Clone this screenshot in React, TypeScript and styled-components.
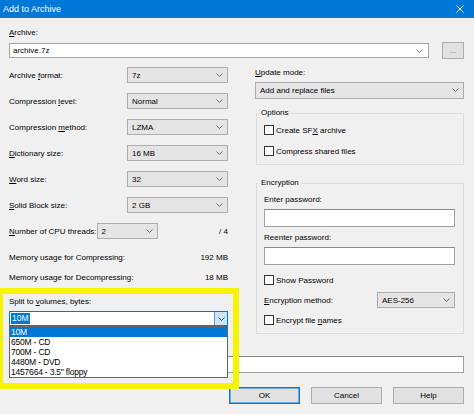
import React from "react";
import styled, { createGlobalStyle } from "styled-components";

const Global = createGlobalStyle`
  html, body { margin: 0; padding: 0; background: #f0f0f0; }
  body { font-family: "Liberation Sans", Arial, sans-serif; font-size: 8px; color: #000; }
  * { box-sizing: border-box; }
  u { text-decoration-thickness: 1px; text-underline-offset: 1px; }
`;

const Window = styled.div`
  position: relative;
  width: 474px;
  height: 414px;
  overflow: hidden;
  background: #f0f0f0;
  display: flex;
  flex-direction: column;
`;

const TitleBar = styled.div`
  flex: none;
  height: 18px;
  background: #0078d7;
  color: #fff;
  display: flex;
  align-items: center;
  justify-content: space-between;
  padding: 0 10px 0 3px;
  font-size: 9px;
`;

const Body = styled.div`
  display: flex;
  flex-direction: column;
  padding: 0 10px 0 9px;
`;

const Label = styled.div<{ $mt?: number }>`
  height: 12px;
  line-height: 12px;
  margin-top: ${(p) => p.$mt ?? 0}px;
  white-space: nowrap;
`;

const ArchiveRow = styled.div`
  display: flex;
  align-items: flex-start;
  height: 17px;
  margin-top: 3px;
`;

const EditCombo = styled.div`
  width: 420px;
  height: 15px;
  margin-top: 1px;
  background: #fff;
  border: 1px solid #a6a6a6;
  display: flex;
  align-items: center;
  justify-content: space-between;
  padding: 0 5px 0 3px;
`;

const SmallButton = styled.div`
  margin-left: auto;
  width: 22px;
  height: 17px;
  background: #e1e1e1;
  border: 1px solid #adadad;
  color: #777;
  display: flex;
  align-items: center;
  justify-content: center;
  line-height: 1;
`;

const Columns = styled.div`
  display: grid;
  grid-template-columns: 219px 209px;
  column-gap: 27px;
  margin-top: 8px;
  align-items: start;
`;

const Column = styled.div`
  display: flex;
  flex-direction: column;
`;

const FieldRow = styled.div<{ $mt?: number }>`
  display: flex;
  align-items: center;
  height: 16px;
  margin-top: ${(p) => p.$mt ?? 0}px;
`;

const RowLabel = styled.div`
  flex: 1;
  white-space: nowrap;
`;

const Select = styled.div<{ $w?: number; $h?: number }>`
  flex: none;
  width: ${(p) => (p.$w ? `${p.$w}px` : "100%")};
  height: ${(p) => p.$h ?? 16}px;
  background: #e5e5e5;
  border: 1px solid #adadad;
  display: flex;
  align-items: center;
  justify-content: space-between;
  padding: 0 4px 0 4px;
  white-space: nowrap;
`;

const Suffix = styled.div`
  flex: 1;
  text-align: right;
`;

const InfoRow = styled.div<{ $mt: number }>`
  display: flex;
  justify-content: space-between;
  height: 12px;
  line-height: 12px;
  margin-top: ${(p) => p.$mt}px;
`;

const ComboField = styled.div`
  position: relative;
  margin-top: 3px;
  height: 15px;
`;

const FocusCombo = styled.div`
  height: 15px;
  background: #fff;
  border: 1px solid #0078d7;
  display: flex;
  align-items: stretch;
  padding-left: 1px;
`;

const SelectedText = styled.span`
  align-self: center;
  background: #0078d7;
  color: #fff;
  height: 11px;
  line-height: 11px;
  padding: 0 1px;
  font-size: 8.5px;
`;

const ComboArrow = styled.div`
  margin-left: auto;
  width: 13px;
  background: #cce4f7;
  border-left: 1px solid #569de5;
  display: flex;
  align-items: center;
  justify-content: center;
`;

const DropList = styled.div`
  position: absolute;
  top: 100%;
  left: 0;
  right: 0;
  background: #fff;
  border: 1px solid #646464;
  z-index: 5;
`;

const DropItem = styled.div<{ $active?: boolean }>`
  height: 10px;
  line-height: 10px;
  padding-left: 1px;
  font-size: 8.5px;
  letter-spacing: -0.2px;
  white-space: nowrap;
  background: ${(p) => (p.$active ? "#0078d7" : "transparent")};
  color: ${(p) => (p.$active ? "#fff" : "#000")};
`;

const Group = styled.fieldset<{ $mt: number }>`
  margin: ${(p) => p.$mt}px 0 0 1px;
  border: 1px solid #dcdcdc;
  padding: 0 8px 7px 7px;
  min-width: 0;
  display: flex;
  flex-direction: column;
`;

const Legend = styled.legend`
  padding: 0 2px;
  margin-left: -5px;
  height: 12px;
  line-height: 12px;
  font-size: 8px;
`;

const CheckRow = styled.div<{ $mt: number }>`
  display: flex;
  align-items: center;
  height: 12px;
  margin-top: ${(p) => p.$mt}px;
  white-space: nowrap;
`;

const Box = styled.span`
  width: 10px;
  height: 10px;
  border: 1px solid #333;
  background: #fff;
  margin-right: 2px;
  flex: none;
`;

const TextInput = styled.div<{ $mt: number; $h?: number }>`
  height: ${(p) => p.$h ?? 18}px;
  margin-top: ${(p) => p.$mt}px;
  background: #fff;
  border: 1px solid #a0a0a0;
  border-top-color: #8a8a8a;
`;

const Spacer = styled.div<{ $h: number; $mt: number }>`
  height: ${(p) => p.$h}px;
  margin-top: ${(p) => p.$mt}px;
`;

const ButtonRow = styled.div`
  display: flex;
  justify-content: flex-end;
  gap: 11px;
  margin-top: 14px;
`;

const Button = styled.div<{ $primary?: boolean }>`
  width: 71px;
  height: 17px;
  background: #e1e1e1;
  border: 1px solid ${(p) => (p.$primary ? "#0078d7" : "#adadad")};
  box-shadow: ${(p) => (p.$primary ? "inset 0 0 0 0.5px #0078d7" : "none")};
  display: flex;
  align-items: center;
  justify-content: center;
`;

const Highlight = styled.div`
  position: absolute;
  left: -3px;
  top: 288px;
  width: 242px;
  height: 101px;
  border: 6px solid #f7f400;
  pointer-events: none;
  z-index: 10;
`;

const Chevron = ({ color = "#606060" }: { color?: string }) => (
  <svg width="7" height="4" viewBox="0 0 7 4" style={{ flex: "none" }}>
    <path d="M0.5 0.5 L3.5 3.5 L6.5 0.5" fill="none" stroke={color} strokeWidth="0.9" />
  </svg>
);

const CloseIcon = () => (
  <svg width="8" height="8" viewBox="0 0 8 8">
    <path d="M0.5 0.5 L7.5 7.5 M7.5 0.5 L0.5 7.5" stroke="#fff" strokeWidth="1" />
  </svg>
);

type Row = { label: React.ReactNode; value: string };

const rows: Row[] = [
  { label: <>Archive <u>f</u>ormat:</>, value: "7z" },
  { label: <>Compression <u>l</u>evel:</>, value: "Normal" },
  { label: <>Compression <u>m</u>ethod:</>, value: "LZMA" },
  { label: <><u>D</u>ictionary size:</>, value: "16 MB" },
  { label: <><u>W</u>ord size:</>, value: "32" },
  { label: <><u>S</u>olid Block size:</>, value: "2 GB" },
];

const volumes = ["10M", "650M - CD", "700M - CD", "4480M - DVD", '1457664 - 3.5" floppy'];

export default function App() {
  return (
    <>
      <Global />
      <Window>
        <TitleBar>
          <span>Add to Archive</span>
          <CloseIcon />
        </TitleBar>
        <Body>
          <Label $mt={9}>
            <u>A</u>rchive:
          </Label>
          <ArchiveRow>
            <EditCombo>
              <span>archive.7z</span>
              <Chevron />
            </EditCombo>
            <SmallButton>...</SmallButton>
          </ArchiveRow>
          <Columns>
            <Column>
              {rows.map((r, i) => (
                <FieldRow key={i} $mt={i === 0 ? 0 : 10}>
                  <RowLabel>{r.label}</RowLabel>
                  <Select $w={101}>
                    <span>{r.value}</span>
                    <Chevron />
                  </Select>
                </FieldRow>
              ))}
              <FieldRow $mt={10}>
                <RowLabel>
                  <u>N</u>umber of CPU threads:
                </RowLabel>
                <Select $w={61}>
                  <span>2</span>
                  <Chevron />
                </Select>
                <Suffix>/ 4</Suffix>
              </FieldRow>
              <InfoRow $mt={13}>
                <span>Memory usage for Compressing:</span>
                <span>192 MB</span>
              </InfoRow>
              <InfoRow $mt={8}>
                <span>Memory usage for Decompressing:</span>
                <span>18 MB</span>
              </InfoRow>
              <Label $mt={12}>
                Split to <u>v</u>olumes, bytes:
              </Label>
              <ComboField>
                <FocusCombo>
                  <SelectedText>10M</SelectedText>
                  <ComboArrow>
                    <Chevron color="#333" />
                  </ComboArrow>
                </FocusCombo>
                <DropList>
                  {volumes.map((v, i) => (
                    <DropItem key={v} $active={i === 0}>
                      {v}
                    </DropItem>
                  ))}
                </DropList>
              </ComboField>
            </Column>
            <Column>
              <Label>
                <u>U</u>pdate mode:
              </Label>
              <FieldRow $mt={3}>
                <Select $h={17}>
                  <span>Add and replace files</span>
                  <Chevron />
                </Select>
              </FieldRow>
              <Group $mt={9}>
                <Legend>Options</Legend>
                <CheckRow $mt={5}>
                  <Box />
                  <span>
                    Create SF<u>X</u> archive
                  </span>
                </CheckRow>
                <CheckRow $mt={9}>
                  <Box />
                  <span>Compress shared files</span>
                </CheckRow>
              </Group>
              <Group $mt={12}>
                <Legend>Encryption</Legend>
                <Label $mt={5}>Enter password:</Label>
                <TextInput $mt={3} />
                <Label $mt={5}>Reenter password:</Label>
                <TextInput $mt={3} />
                <CheckRow $mt={9}>
                  <Box />
                  <span>Show Password</span>
                </CheckRow>
                <FieldRow $mt={6}>
                  <RowLabel>
                    <u>E</u>ncryption method:
                  </RowLabel>
                  <Select $w={78}>
                    <span>AES-256</span>
                    <Chevron />
                  </Select>
                </FieldRow>
                <CheckRow $mt={6}>
                  <Box />
                  <span>
                    Encrypt file <u>n</u>ames
                  </span>
                </CheckRow>
              </Group>
            </Column>
          </Columns>
          <Spacer $mt={4} $h={12} />
          <TextInput $mt={6} $h={17} />
          <ButtonRow>
            <Button $primary>OK</Button>
            <Button>Cancel</Button>
            <Button>Help</Button>
          </ButtonRow>
        </Body>
        <Highlight />
      </Window>
    </>
  );
}
